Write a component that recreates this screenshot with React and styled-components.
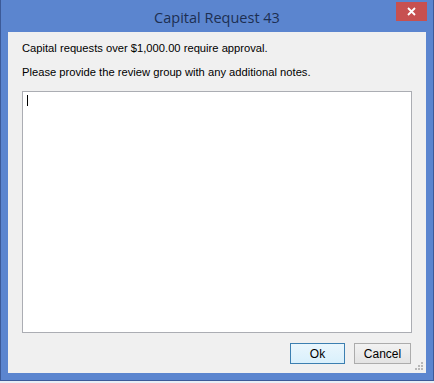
import React from "react";
import styled, { createGlobalStyle } from "styled-components";

const Global = createGlobalStyle`
  html, body {
    margin: 0;
    padding: 0;
    background: #e9eef6;
  }
  body {
    width: 434px;
    height: 383px;
    overflow: hidden;
  }
`;

const Window = styled.div`
  box-sizing: border-box;
  width: 434px;
  height: 381px;
  background: #5b85cf;
  border: 1px solid #3c5a98;
  border-top: none;
  display: flex;
  flex-direction: column;
  padding: 0 7px 7px 7px;
`;

const TitleBar = styled.div`
  height: 32px;
  display: flex;
  align-items: center;
  justify-content: center;
  position: relative;
`;

const Title = styled.div`
  font-family: "Open Sans", "Noto Sans", sans-serif;
  font-size: 14.5px;
  color: #1d2f52;
  padding-top: 2px;
`;

const CloseBtn = styled.div`
  position: absolute;
  right: -1px;
  top: 2px;
  width: 31px;
  height: 19px;
  background: #c75050;
  display: flex;
  align-items: center;
  justify-content: center;
`;

const Client = styled.div`
  flex: 1;
  background: #f0f0f0;
  display: flex;
  flex-direction: column;
  padding: 10px 14px 0 14px;
  position: relative;
  font-family: "Liberation Sans", Arial, sans-serif;
  font-size: 11.2px;
  color: #000;
`;

const Line = styled.div`
  height: 13px;
  line-height: 13px;
  margin-top: ${(p) => p.$top}px;
`;

const Notes = styled.div`
  margin-top: 12px;
  height: 240px;
  background: #fff;
  border: 1px solid #abadb3;
  position: relative;
`;

const Caret = styled.div`
  position: absolute;
  left: 4px;
  top: 3px;
  width: 1px;
  height: 11px;
  background: #000;
`;

const Buttons = styled.div`
  display: flex;
  justify-content: flex-end;
  gap: 9px;
  margin-top: 10px;
  padding-right: 1px;
`;

const Button = styled.div`
  box-sizing: border-box;
  width: ${(p) => p.$w}px;
  height: 21px;
  display: flex;
  align-items: center;
  justify-content: center;
  border: 1px solid ${(p) => (p.$primary ? "#3c7fb1" : "#acacac")};
  background: ${(p) =>
    p.$primary
      ? "linear-gradient(#eaf6fd, #d9f0fc)"
      : "linear-gradient(#f2f2f2, #e3e3e3)"};
  font-size: 12px;
  color: #000;
`;

const Grip = styled.svg`
  position: absolute;
  right: 2px;
  bottom: 2px;
`;

export default function App() {
  return (
    <>
      <Global />
      <Window>
        <TitleBar>
          <Title>Capital Request 43</Title>
          <CloseBtn>
            <svg width="9" height="9" viewBox="0 0 9 9">
              <path d="M1 1 L8 8 M8 1 L1 8" stroke="#fff" strokeWidth="1.8" />
            </svg>
          </CloseBtn>
        </TitleBar>
        <Client>
          <Line $top={0}>Capital requests over $1,000.00 require approval.</Line>
          <Line $top={11}>Please provide the review group with any additional notes.</Line>
          <Notes>
            <Caret />
          </Notes>
          <Buttons>
            <Button $primary $w={55}>Ok</Button>
            <Button $w={57}>Cancel</Button>
          </Buttons>
          <Grip width="9" height="9" viewBox="0 0 9 9">
            <g fill="#b8b8b8">
              <rect x="6" y="0" width="2" height="2" />
              <rect x="3" y="3" width="2" height="2" />
              <rect x="6" y="3" width="2" height="2" />
              <rect x="0" y="6" width="2" height="2" />
              <rect x="3" y="6" width="2" height="2" />
              <rect x="6" y="6" width="2" height="2" />
            </g>
          </Grip>
        </Client>
      </Window>
    </>
  );
}
